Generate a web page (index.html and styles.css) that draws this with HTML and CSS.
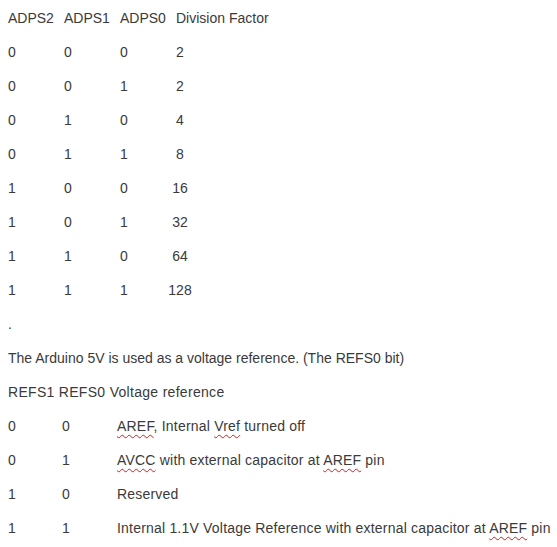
FILE: index.html
```html
<!DOCTYPE html>
<html>
<head>
<meta charset="utf-8">
<link rel="stylesheet" href="styles.css">
</head>
<body>
<div class="page">
  <div class="row head4"><span class="c">ADPS2</span><span class="c">ADPS1</span><span class="c">ADPS0</span><span class="c">Division Factor</span></div>
  <div class="row t4"><span class="c">0</span><span class="c">0</span><span class="c">0</span><span class="v">2</span></div>
  <div class="row t4"><span class="c">0</span><span class="c">0</span><span class="c">1</span><span class="v">2</span></div>
  <div class="row t4"><span class="c">0</span><span class="c">1</span><span class="c">0</span><span class="v">4</span></div>
  <div class="row t4"><span class="c">0</span><span class="c">1</span><span class="c">1</span><span class="v">8</span></div>
  <div class="row t4"><span class="c">1</span><span class="c">0</span><span class="c">0</span><span class="v">16</span></div>
  <div class="row t4"><span class="c">1</span><span class="c">0</span><span class="c">1</span><span class="v">32</span></div>
  <div class="row t4"><span class="c">1</span><span class="c">1</span><span class="c">0</span><span class="v">64</span></div>
  <div class="row t4"><span class="c">1</span><span class="c">1</span><span class="c">1</span><span class="v">128</span></div>
  <div class="row dot">.</div>
  <div class="row">The Arduino 5V is used as a voltage reference. (The REFS0 bit)</div>
  <div class="row wide">REFS1 REFS0 Voltage reference</div>
  <div class="row t3"><span class="c">0</span><span class="c">0</span><span class="d"><span class="sp">AREF</span>, Internal <span class="sp">Vref</span> turned off</span></div>
  <div class="row t3"><span class="c">0</span><span class="c">1</span><span class="d"><span class="sp">AVCC</span> with external capacitor at <span class="sp">AREF</span> pin</span></div>
  <div class="row t3"><span class="c">1</span><span class="c">0</span><span class="d">Reserved</span></div>
  <div class="row t3"><span class="c">1</span><span class="c">1</span><span class="d">Internal 1.1V Voltage Reference with external capacitor at <span class="sp">AREF</span> pin</span></div>
</div>
</body>
</html>
```
FILE: styles.css
```css
html, body {
  margin: 0;
  padding: 0;
  background: #fff;
}
.page {
  padding: 1px 0 0 8px;
  font-family: "Liberation Sans", Arial, sans-serif;
  font-size: 14px;
  color: #3a3a3a;
}
.row {
  height: 34px;
  line-height: 34px;
  white-space: nowrap;
}
.head4 {
  display: grid;
  grid-template-columns: 56px 56px 56px auto;
}
.t4 {
  display: grid;
  grid-template-columns: 56px 56px 48px 24px;
}
.t4 .v {
  text-align: center;
}
.wide {
  letter-spacing: 0.3px;
}
.t3 {
  display: grid;
  grid-template-columns: 54px 55px auto;
}
.t3 .d {
  letter-spacing: 0.2px;
}
.sp {
  text-decoration: underline wavy #d02020;
  text-decoration-thickness: 1px;
  text-underline-offset: 3px;
}
```
